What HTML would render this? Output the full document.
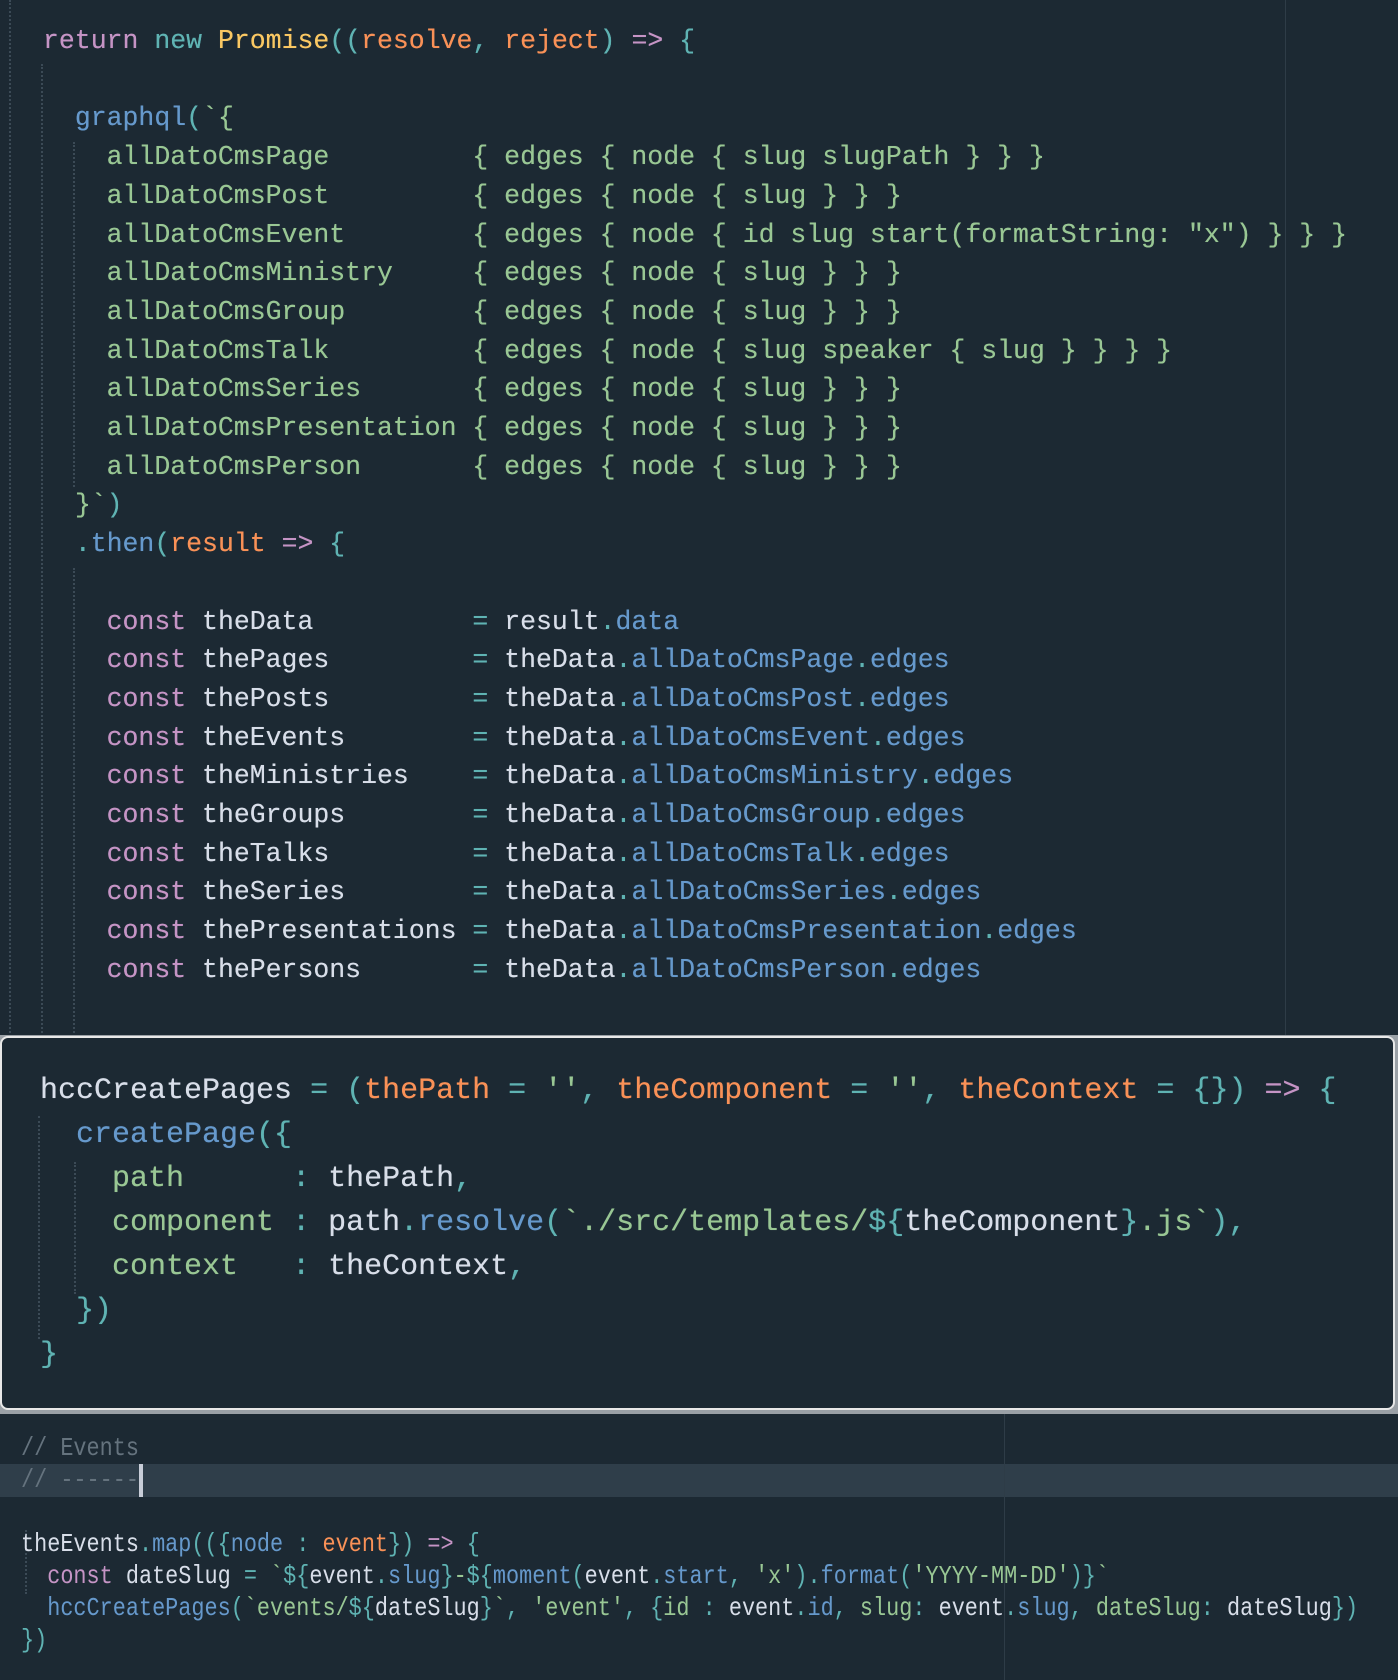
<!DOCTYPE html>
<html><head><meta charset="utf-8"><style>
html,body{margin:0;padding:0;width:1398px;height:1680px;overflow:hidden;background:#1d2a35;}
.p{position:absolute;background:#1c2933;overflow:hidden;}
.l{position:absolute;white-space:pre;font-family:"Liberation Mono","DejaVu Sans Mono",monospace;color:#d8dee9;}
.p1 .l{font-size:26.5px;line-height:38.7px;height:38.7px;left:43px;text-shadow:0 0 0.4px currentColor;}
.p2 .l{font-size:30px;line-height:44px;height:44px;left:40px;text-shadow:0 0 0.5px currentColor;}
.p3 .l{font-size:26px;line-height:32px;height:32px;left:21px;transform:scaleX(0.84);transform-origin:0 0;}
.k{color:#c594c5}.g{color:#99c794}.o{color:#f99157}.y{color:#fac863}.b{color:#6699cc}.t{color:#5fb3b3}.w{color:#d8dee9}.c{color:#65737e}
.guide{position:absolute;width:0;border-left:2px dotted #3b4a56;}
</style></head><body>
<div class="p p1" style="left:0;top:0;width:1398px;height:1037px;">
<div class="guide" style="left:9px;top:0;height:1037px"></div>
<div class="guide" style="left:41px;top:64px;height:973px"></div>
<div class="guide" style="left:73px;top:142px;height:345px"></div>
<div class="guide" style="left:73px;top:568px;height:469px"></div>
<div style="position:absolute;left:1285px;top:0;width:1px;height:1037px;background:#2e3c47"></div>
<div class="l" style="top:22px"><span class="k">return</span> <span class="t">new</span> <span class="y">Promise</span><span class="t">((</span><span class="o">resolve</span><span class="t">,</span> <span class="o">reject</span><span class="t">)</span> <span class="k">=&gt;</span> <span class="t">{</span></div>
<div class="l" style="top:99.4px">  <span class="b">graphql</span><span class="t">(</span><span class="g">`{</span></div>
<div class="l g" style="top:138.1px">    allDatoCmsPage         { edges { node { slug slugPath } } }</div>
<div class="l g" style="top:176.8px">    allDatoCmsPost         { edges { node { slug } } }</div>
<div class="l g" style="top:215.5px">    allDatoCmsEvent        { edges { node { id slug start(formatString: "x") } } }</div>
<div class="l g" style="top:254.2px">    allDatoCmsMinistry     { edges { node { slug } } }</div>
<div class="l g" style="top:292.9px">    allDatoCmsGroup        { edges { node { slug } } }</div>
<div class="l g" style="top:331.6px">    allDatoCmsTalk         { edges { node { slug speaker { slug } } } }</div>
<div class="l g" style="top:370.3px">    allDatoCmsSeries       { edges { node { slug } } }</div>
<div class="l g" style="top:409px">    allDatoCmsPresentation { edges { node { slug } } }</div>
<div class="l g" style="top:447.7px">    allDatoCmsPerson       { edges { node { slug } } }</div>
<div class="l" style="top:486.4px">  <span class="g">}`</span><span class="t">)</span></div>
<div class="l" style="top:525.1px">  <span class="t">.</span><span class="b">then</span><span class="t">(</span><span class="o">result</span> <span class="k">=&gt;</span> <span class="t">{</span></div>
<div class="l" style="top:602.5px">    <span class="k">const</span> theData          <span class="t">=</span> result<span class="t">.</span><span class="b">data</span></div>
<div class="l" style="top:641.2px">    <span class="k">const</span> thePages         <span class="t">=</span> theData<span class="t">.</span><span class="b">allDatoCmsPage</span><span class="t">.</span><span class="b">edges</span></div>
<div class="l" style="top:679.9px">    <span class="k">const</span> thePosts         <span class="t">=</span> theData<span class="t">.</span><span class="b">allDatoCmsPost</span><span class="t">.</span><span class="b">edges</span></div>
<div class="l" style="top:718.6px">    <span class="k">const</span> theEvents        <span class="t">=</span> theData<span class="t">.</span><span class="b">allDatoCmsEvent</span><span class="t">.</span><span class="b">edges</span></div>
<div class="l" style="top:757.3px">    <span class="k">const</span> theMinistries    <span class="t">=</span> theData<span class="t">.</span><span class="b">allDatoCmsMinistry</span><span class="t">.</span><span class="b">edges</span></div>
<div class="l" style="top:796px">    <span class="k">const</span> theGroups        <span class="t">=</span> theData<span class="t">.</span><span class="b">allDatoCmsGroup</span><span class="t">.</span><span class="b">edges</span></div>
<div class="l" style="top:834.7px">    <span class="k">const</span> theTalks         <span class="t">=</span> theData<span class="t">.</span><span class="b">allDatoCmsTalk</span><span class="t">.</span><span class="b">edges</span></div>
<div class="l" style="top:873.4px">    <span class="k">const</span> theSeries        <span class="t">=</span> theData<span class="t">.</span><span class="b">allDatoCmsSeries</span><span class="t">.</span><span class="b">edges</span></div>
<div class="l" style="top:912.1px">    <span class="k">const</span> thePresentations <span class="t">=</span> theData<span class="t">.</span><span class="b">allDatoCmsPresentation</span><span class="t">.</span><span class="b">edges</span></div>
<div class="l" style="top:950.8px">    <span class="k">const</span> thePersons       <span class="t">=</span> theData<span class="t">.</span><span class="b">allDatoCmsPerson</span><span class="t">.</span><span class="b">edges</span></div>
</div>

<div style="position:absolute;left:0;top:1035px;width:1398px;height:380px;background:#9aa0a6;"></div>
<div class="p p2" style="left:0;top:1036px;width:1395px;height:374px;border:2px solid #e8e8e8;border-radius:8px;box-sizing:border-box;background:#1c2933;">
</div>
<div style="position:absolute;left:0;top:1036px;width:1395px;height:374px;">
<div class="guide" style="left:38px;top:80px;height:223px"></div>
<div class="guide" style="left:74px;top:126px;height:132px"></div>
<div class="p2" style="position:absolute;left:0;top:-1036px;">
<div class="l" style="top:1069px"><span class="w">hccCreatePages</span> <span class="t">=</span> <span class="t">(</span><span class="o">thePath</span> <span class="t">=</span> <span class="g">''</span><span class="t">,</span> <span class="o">theComponent</span> <span class="t">=</span> <span class="g">''</span><span class="t">,</span> <span class="o">theContext</span> <span class="t">=</span> <span class="t">{})</span> <span class="k">=&gt;</span> <span class="t">{</span></div>
<div class="l" style="top:1113px">  <span class="b">createPage</span><span class="t">({</span></div>
<div class="l" style="top:1157px">    <span class="g">path</span>      <span class="t">:</span> thePath<span class="t">,</span></div>
<div class="l" style="top:1201px">    <span class="g">component</span> <span class="t">:</span> path<span class="t">.</span><span class="b">resolve</span><span class="t">(</span><span class="g">`./src/templates/</span><span class="t">${</span>theComponent<span class="t">}</span><span class="g">.js`</span><span class="t">),</span></div>
<div class="l" style="top:1245px">    <span class="g">context</span>   <span class="t">:</span> theContext<span class="t">,</span></div>
<div class="l" style="top:1289px">  <span class="t">})</span></div>
<div class="l" style="top:1333px"><span class="t">}</span></div>
</div>
</div>

<div class="p p3" style="left:0;top:1414px;width:1398px;height:266px;">
<div style="position:absolute;left:0;top:50px;width:1398px;height:33px;background:#2f3e4a"></div>
<div style="position:absolute;left:1004px;top:0;width:1px;height:266px;background:#2e3c47"></div>
<div class="guide" style="left:25px;top:116px;height:64px"></div>
<div style="position:absolute;left:139px;top:50px;width:4px;height:33px;background:#c8cdd8"></div>
<div class="l c" style="top:18px">// Events</div>
<div class="l c" style="top:50px">// ------</div>
<div class="l" style="top:114px">theEvents<span class="t">.</span><span class="b">map</span><span class="t">(({</span><span class="b">node</span> <span class="t">:</span> <span class="o">event</span><span class="t">})</span> <span class="k">=&gt;</span> <span class="t">{</span></div>
<div class="l" style="top:146px">  <span class="k">const</span> dateSlug <span class="t">=</span> <span class="g">`</span><span class="t">${</span>event<span class="t">.</span><span class="b">slug</span><span class="t">}</span><span class="g">-</span><span class="t">${</span><span class="b">moment</span><span class="t">(</span>event<span class="t">.</span><span class="b">start</span><span class="t">,</span> <span class="g">'x'</span><span class="t">).</span><span class="b">format</span><span class="t">(</span><span class="g">'YYYY-MM-DD'</span><span class="t">)}</span><span class="g">`</span></div>
<div class="l" style="top:178px">  <span class="b">hccCreatePages</span><span class="t">(</span><span class="g">`events/</span><span class="t">${</span>dateSlug<span class="t">}</span><span class="g">`</span><span class="t">,</span> <span class="g">'event'</span><span class="t">,</span> <span class="t">{</span><span class="g">id</span> <span class="t">:</span> event<span class="t">.</span><span class="b">id</span><span class="t">,</span> <span class="g">slug</span><span class="t">:</span> event<span class="t">.</span><span class="b">slug</span><span class="t">,</span> <span class="g">dateSlug</span><span class="t">:</span> dateSlug<span class="t">})</span></div>
<div class="l" style="top:210px"><span class="t">})</span></div>
</div>
</body></html>
